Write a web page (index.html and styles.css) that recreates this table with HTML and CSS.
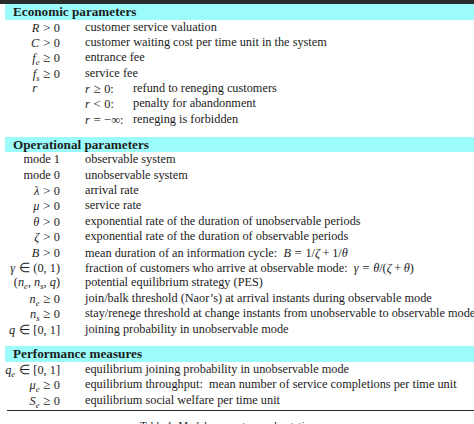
FILE: index.html
```html
<!DOCTYPE html>
<html>
<head>
<meta charset="utf-8">
<link rel="stylesheet" href="styles.css">
</head>
<body>
<div class="page">
  <div class="toprule"></div>

  <div class="head">Economic parameters</div>
  <div class="rows">
    <div class="sym"><i>R</i><span class="rel">&gt;</span>0</div><div class="desc">customer service valuation</div>
    <div class="sym"><i>C</i><span class="rel">&gt;</span>0</div><div class="desc">customer waiting cost per time unit in the system</div>
    <div class="sym"><i>f</i><sub><i>e</i></sub><span class="rel">≥</span>0</div><div class="desc">entrance fee</div>
    <div class="sym"><i>f</i><sub><i>s</i></sub><span class="rel">≥</span>0</div><div class="desc">service fee</div>
    <div class="sym sym-r"><i>r</i></div>
    <div class="desc cases">
      <span><i>r</i><span class="rel">≥</span>0:</span><span>refund to reneging customers</span>
      <span><i>r</i><span class="rel">&lt;</span>0:</span><span>penalty for abandonment</span>
      <span><i>r</i><span class="rel">=</span>−∞:</span><span>reneging is forbidden</span>
    </div>
  </div>

  <div class="head">Operational parameters</div>
  <div class="rows">
    <div class="sym">mode 1</div><div class="desc">observable system</div>
    <div class="sym">mode 0</div><div class="desc">unobservable system</div>
    <div class="sym"><i>λ</i><span class="rel">&gt;</span>0</div><div class="desc">arrival rate</div>
    <div class="sym"><i>μ</i><span class="rel">&gt;</span>0</div><div class="desc">service rate</div>
    <div class="sym"><i>θ</i><span class="rel">&gt;</span>0</div><div class="desc">exponential rate of the duration of unobservable periods</div>
    <div class="sym"><i>ζ</i><span class="rel">&gt;</span>0</div><div class="desc">exponential rate of the duration of observable periods</div>
    <div class="sym"><i>B</i><span class="rel">&gt;</span>0</div><div class="desc">mean duration of an information cycle:&nbsp; <i>B</i><span class="rel">=</span>1/<i>ζ</i><span class="bin">+</span>1/<i>θ</i></div>
    <div class="sym"><i>γ</i><span class="rel">∈</span>(0, 1)</div><div class="desc">fraction of customers who arrive at observable mode:&nbsp; <i>γ</i><span class="rel">=</span><i>θ</i>/(<i>ζ</i><span class="bin">+</span><i>θ</i>)</div>
    <div class="sym">(<i>n</i><sub><i>e</i></sub>, <i>n</i><sub><i>s</i></sub>, <i>q</i>)</div><div class="desc">potential equilibrium strategy (PES)</div>
    <div class="sym"><i>n</i><sub><i>e</i></sub><span class="rel">≥</span>0</div><div class="desc">join/balk threshold (Naor’s) at arrival instants during observable mode</div>
    <div class="sym"><i>n</i><sub><i>s</i></sub><span class="rel">≥</span>0</div><div class="desc">stay/renege threshold at change instants from unobservable to observable mode</div>
    <div class="sym"><i>q</i><span class="rel">∈</span>[0, 1]</div><div class="desc">joining probability in unobservable mode</div>
  </div>

  <div class="head">Performance measures</div>
  <div class="rows rows-last">
    <div class="sym"><i>q</i><sub><i>e</i></sub><span class="rel">∈</span>[0, 1]</div><div class="desc">equilibrium joining probability in unobservable mode</div>
    <div class="sym"><i>μ</i><sub><i>e</i></sub><span class="rel">≥</span>0</div><div class="desc">equilibrium throughput:&nbsp; mean number of service completions per time unit</div>
    <div class="sym"><i>S</i><sub><i>e</i></sub><span class="rel">≥</span>0</div><div class="desc">equilibrium social welfare per time unit</div>
  </div>

  <div class="bottomrule"></div>
  <div class="caption">Table 1: Model parameters and notation</div>
</div>
</body>
</html>
```
FILE: styles.css
```css
html, body {
  margin: 0;
  padding: 0;
  background: #ffffff;
}

body {
  width: 474px;
  height: 424px;
  overflow: hidden;
  font-family: "Liberation Serif", "Times New Roman", serif;
  font-size: 12.3px;
  color: #1c1c1c;
}

.page {
  display: flex;
  flex-direction: column;
}

.toprule {
  height: 4px;
  background: #2b2b2b;
}

.head {
  margin-left: 5px;
  height: 15.5px;
  line-height: 15.5px;
  padding-left: 8px;
  background: #9cfcfc;
  font-weight: bold;
  font-size: 13.2px;
  white-space: nowrap;
}

.rows {
  display: grid;
  grid-template-columns: 60px 1fr;
  column-gap: 25px;
  grid-auto-rows: 15.4px;
  line-height: 15.4px;
  margin-bottom: 9.5px;
  white-space: nowrap;
}

.rows-last {
  margin-bottom: 1.8px;
}

.sym {
  text-align: right;
}

.sym-r {
  grid-row: span 3;
  padding-right: 23px;
}

.rel {
  display: inline-block;
  padding: 0 3.6px;
  font-size: 13px;
}

.bin {
  display: inline-block;
  padding: 0 2.6px;
}

.cases {
  grid-row: span 3;
  display: grid;
  grid-template-columns: 48px 1fr;
  grid-auto-rows: 15.4px;
}

sub {
  font-size: 70%;
  vertical-align: -0.3em;
  line-height: 0;
}

.bottomrule {
  margin-left: 7px;
  height: 1.3px;
  background: #2a2a2a;
}

.caption {
  margin-top: 7px;
  padding-left: 140px;
  font-size: 11px;
  line-height: 14px;
  white-space: nowrap;
}
```
